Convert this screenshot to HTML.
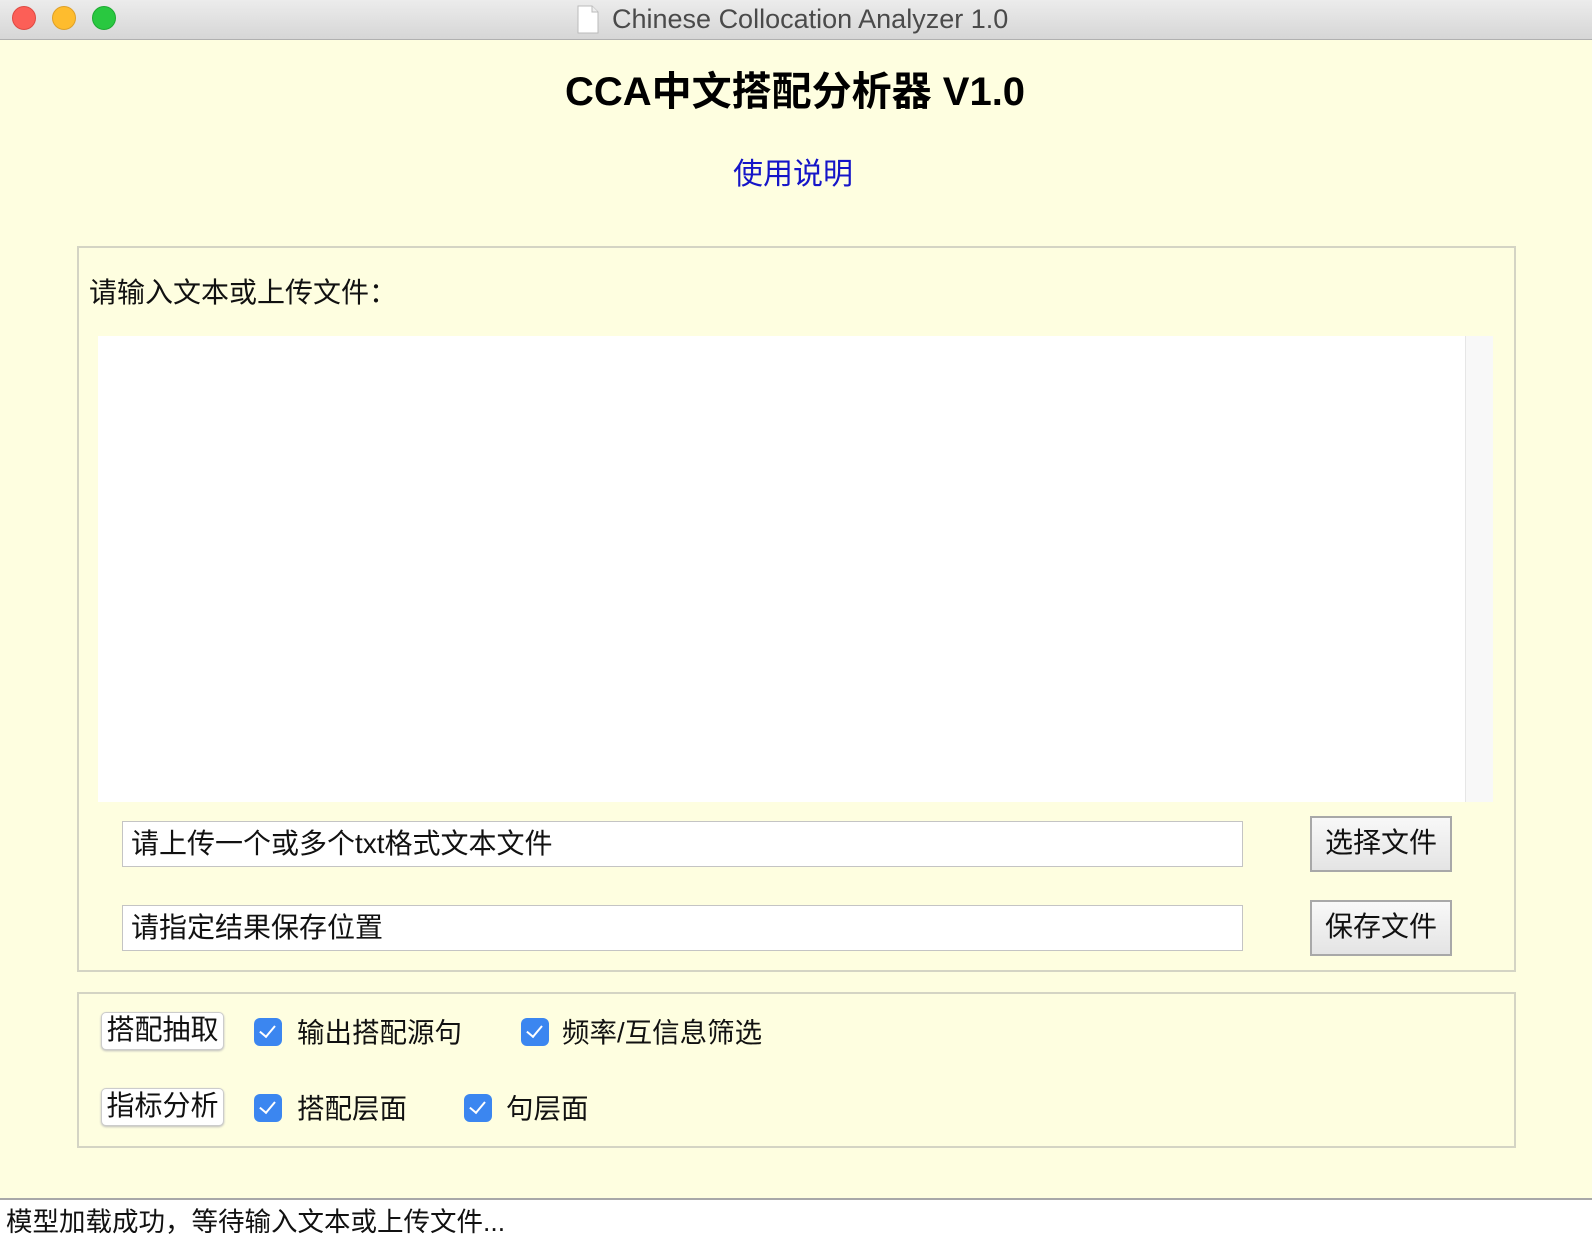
<!DOCTYPE html>
<html><head><meta charset="utf-8"><style>
*{box-sizing:border-box;margin:0;padding:0}
body{width:1592px;height:1240px;background:#fefee0;font-family:"Liberation Sans","Noto Sans CJK SC",sans-serif;position:relative;overflow:hidden;color:#111}
.tb{position:absolute;left:0;top:0;width:1592px;height:40px;background:linear-gradient(#ececec,#d6d6d6);border-bottom:1px solid #b0b0b0}
.dot{position:absolute;top:6px;width:24px;height:24px;border-radius:50%}
.a{position:absolute;white-space:nowrap}
.box{position:absolute;border:2px solid #d4d4c4}
.inp{position:absolute;background:#fff;border:1px solid #c4c4c4;font-size:28px;line-height:43px;padding-left:8px;white-space:nowrap}
.btn{position:absolute;background:linear-gradient(#f8f8f8,#e4e4e4);border:2px solid #a8a8a8;font-size:28px;text-align:center;line-height:50px}
.rb{position:absolute;background:#fff;border:1px solid #ccc;border-radius:5px;box-shadow:0 1px 2px #bbb;font-size:28px;text-align:center;line-height:34px;width:123px;height:38px}
.cb{position:absolute;width:28px;height:28px;border-radius:6px;background:#3b86f0}
.cb::after{content:"";position:absolute;left:9px;top:4px;width:7px;height:13px;border:solid #fff;border-width:0 2px 2px 0;transform:rotate(40deg)}
.lb{position:absolute;font-size:27.5px;white-space:nowrap}
</style></head><body>
<div class="tb">
<div class="dot" style="left:12px;background:#fc5f57;border:1px solid #de4a42"></div>
<div class="dot" style="left:52px;background:#febc2e;border:1px solid #dea028"></div>
<div class="dot" style="left:92px;background:#29c840;border:1px solid #1eaa32"></div>
<svg class="a" style="left:577px;top:5px" width="22" height="29" viewBox="0 0 22 29"><path d="M1 1H15L21 7V28H1Z" fill="#fff" stroke="#bbb"/><path d="M15 1V7H21" fill="#eee" stroke="#bbb"/></svg>
<div class="a" style="left:612px;top:4px;font-size:27px;color:#4a4a4a">Chinese Collocation Analyzer 1.0</div>
</div>
<div class="a" style="left:565px;top:59px;font-size:40px;font-weight:bold;color:#000">CCA中文搭配分析器 V1.0</div>
<div class="a" style="left:733px;top:149px;font-size:30px;color:#1515c8">使用说明</div>
<div class="box" style="left:77px;top:246px;width:1439px;height:726px"></div>
<div class="a" style="left:89px;top:271px;font-size:28px">请输入文本或上传文件：</div>
<div class="a" style="left:98px;top:336px;width:1395px;height:466px;background:#fff"></div>
<div class="a" style="left:1465px;top:336px;width:28px;height:466px;background:#f8f8f8;border-left:1px solid #e6e6e6"></div>
<div class="inp" style="left:122px;top:821px;width:1121px;height:46px">请上传一个或多个txt格式文本文件</div>
<div class="inp" style="left:122px;top:905px;width:1121px;height:46px">请指定结果保存位置</div>
<div class="btn" style="left:1310px;top:816px;width:142px;height:56px">选择文件</div>
<div class="btn" style="left:1310px;top:900px;width:142px;height:56px">保存文件</div>
<div class="box" style="left:77px;top:992px;width:1439px;height:156px"></div>
<div class="rb" style="left:101px;top:1012px">搭配抽取</div>
<div class="cb" style="left:254px;top:1018px"></div><div class="lb" style="left:297px;top:1010px">输出搭配源句</div>
<div class="cb" style="left:521px;top:1018px"></div><div class="lb" style="left:562px;top:1010px">频率/互信息筛选</div>
<div class="rb" style="left:101px;top:1088px">指标分析</div>
<div class="cb" style="left:254px;top:1094px"></div><div class="lb" style="left:297px;top:1086px">搭配层面</div>
<div class="cb" style="left:464px;top:1094px"></div><div class="lb" style="left:506px;top:1086px">句层面</div>
<div class="a" style="left:0;top:1198px;width:1592px;height:42px;background:#fff;border-top:2px solid #a8a8a8"></div>
<div class="a" style="left:6px;top:1200px;font-size:26.5px">模型加载成功，等待输入文本或上传文件...</div>
</body></html>
